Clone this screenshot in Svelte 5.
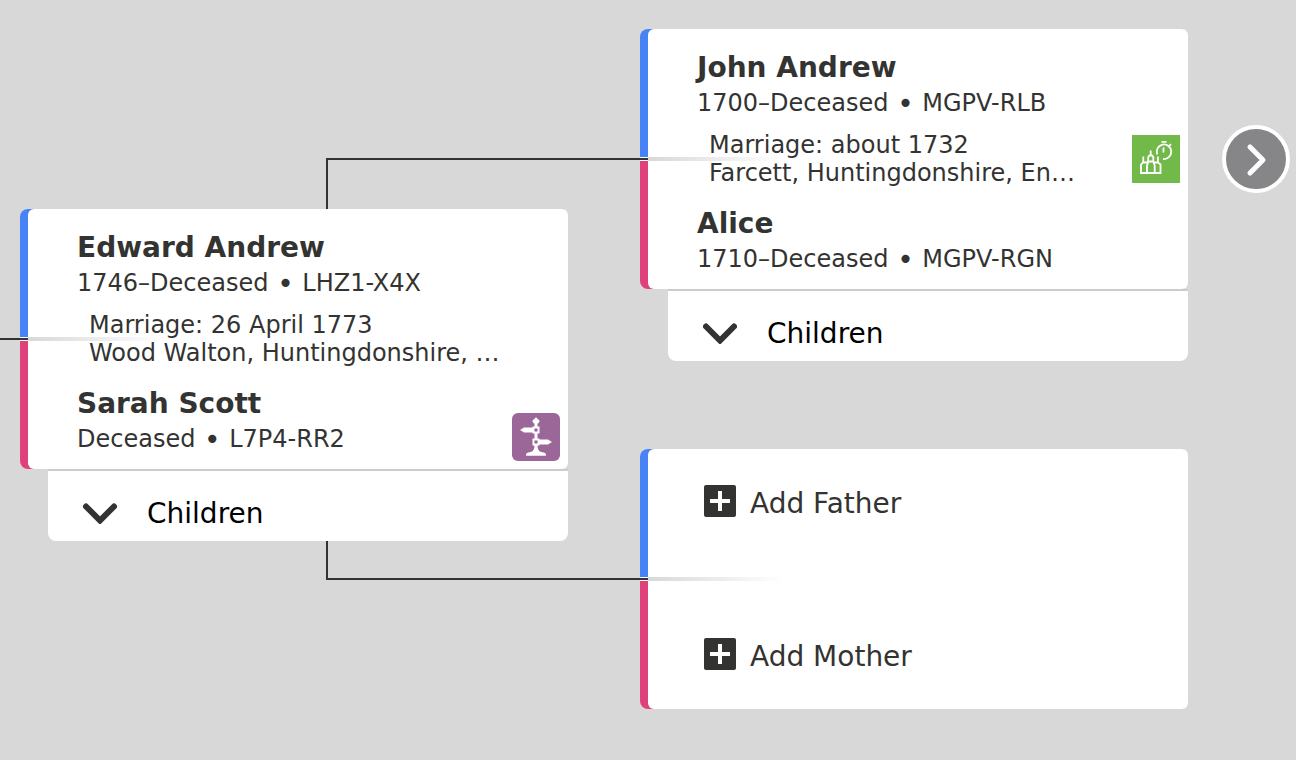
<!--
  Pedigree view: one column per generation, joined by connector lines.
  Each family is a couple card with an optional "Children" toggle below it.
-->

<script>
	let generations = $state([
		[
			{
				id: 'edward-sarah',
				father: { name: 'Edward Andrew', life: '1746–Deceased', pid: 'LHZ1-X4X' },
				marriage: { date: 'Marriage: 26 April 1773', place: 'Wood Walton, Huntingdonshire, …' },
				mother: { name: 'Sarah Scott', life: 'Deceased', pid: 'L7P4-RR2', badge: 'signpost' },
				hasParents: true,
				expanded: false
			}
		],
		[
			{
				id: 'john-alice',
				father: { name: 'John Andrew', life: '1700–Deceased', pid: 'MGPV-RLB' },
				marriage: {
					date: 'Marriage: about 1732',
					place: 'Farcett, Huntingdonshire, En…',
					badge: 'cake'
				},
				mother: { name: 'Alice', life: '1710–Deceased', pid: 'MGPV-RGN' },
				expanded: false
			},
			{ id: 'unknown' }
		]
	]);
</script>

{#snippet badge(kind)}
	{#if kind === 'signpost'}
		<button class="badge badge--signpost">
			<svg viewBox="0 0 48 48" aria-hidden="true">
				<g fill="#fff">
					<path d="M24 4.2L27.8 8l-1.6 2.5h-.7V33h-3V10.500h-.7L20.200 8z" />
					<path d="M8 17l4-2.600h8.500v-1h7v7.200h-7v-1H12z" />
					<path d="M40 29l-4-2.600h-8.500v-1h-7v7.200h7v-1H36z" />
					<path d="M22.500 32h3c.1 3.500.8 5.800 3 6.700l4 1c1.200.4 1.500 1.500 1.500 3H14c0-1.500.3-2.600 1.500-3l4-1c2.200-.9 2.900-3.200 3-6.700z" />
				</g>
				<circle cx="24" cy="17" r="1.8" fill="#9b6799" />
				<circle cx="24" cy="29" r="1.8" fill="#9b6799" />
			</svg>
		</button>
	{:else if kind === 'cake'}
		<button class="badge badge--cake">
			<svg viewBox="0 0 48 48" fill="none" stroke="#fff" stroke-width="1.8" aria-hidden="true">
				<path d="M9 38V29.500L11 27.500h3.500L16 26.500h5l1.500 1H26l2.500 2V38z" />
				<path d="M15 38v-7.500l1.500-4M22.700 38v-7.500l-1.500-4M11.300 21.500v6M25.900 21.500v6M18.700 15.500V20" />
				<path d="M16.200 27v-5l1.300-1.500h2.500l1.300 1.500v5" />
				<path d="M25.200 19.500a7.300 7.300 0 1 1 5.800 4.500" />
				<path d="M29.500 6.800h5M37.200 11l1.800-1.800M31.500 12.500v5" />
			</svg>
		</button>
	{/if}
{/snippet}

{#snippet person(details)}
	<div class="row">
		<div class="person">
			<a class="person__name" href="#person">{details.name}</a>
			<p class="person__details">
				{details.life} <span class="person__dot">•</span> {details.pid}
			</p>
		</div>
		{@render badge(details.badge)}
	</div>
{/snippet}

{#snippet addParent(label)}
	<button class="add">
		<svg class="add__icon" viewBox="0 0 32 32" aria-hidden="true">
			<rect width="32" height="32" rx="2" fill="#333331" />
			<path d="M16 6v20M6 16h20" stroke="#fff" stroke-width="4" />
		</svg>
		<span>{label}</span>
	</button>
{/snippet}

<main class="tree">
	{#each generations as families, index (index)}
		<section class="generation" class:generation--first={index === 0}>
			{#each families as family (family.id)}
				<article class="family" class:family--linked={family.hasParents}>
					<div class="couple">
						<div class="couple__body">
							{#if family.father}
								{@render person(family.father)}
								<div class="row row--marriage">
									<div class="marriage">
										<p>{family.marriage.date}</p>
										<p>{family.marriage.place}</p>
									</div>
									{@render badge(family.marriage.badge)}
								</div>
								{@render person(family.mother)}
							{:else}
								<div class="couple__empty">
									{@render addParent('Add Father')}
									{@render addParent('Add Mother')}
								</div>
							{/if}
						</div>
					</div>
					{#if family.father}
						<button
							class="children"
							aria-expanded={family.expanded}
							onclick={() => (family.expanded = !family.expanded)}
						>
							<svg class="children__icon" viewBox="0 0 34 22" aria-hidden="true">
								<path d="M3 4.500l14 14 14-14" />
							</svg>
							<span>Children</span>
						</button>
					{/if}
				</article>
			{/each}
		</section>
	{/each}

	<button class="next" aria-label="Next generation">
		<svg viewBox="0 0 60 60" aria-hidden="true">
			<path d="M24 18l13 13-13 13" />
		</svg>
	</button>
</main>

<style>
	:global(body) {
		margin: 0;
		background: #d8d8d8;
	}

	.tree {
		display: flex;
		align-items: flex-start;
		box-sizing: border-box;
		min-height: 100vh;
		padding: 29px 6px 48px 20px;
		overflow: hidden;
		color: #333331;
		font-family: 'DejaVu Sans', Verdana, sans-serif;
		font-size: 24px;
	}

	p {
		margin: 0;
	}

	button {
		padding: 0;
		border: 0;
		color: inherit;
		font: inherit;
		cursor: pointer;
	}

	svg {
		display: block;
	}

	.generation {
		flex: 1;
		display: flex;
		flex-direction: column;
		gap: 88px;
		min-width: 0;
	}

	.generation--first {
		margin-right: 72px;
		padding-top: 180px;
	}

	.family {
		position: relative;
	}

	/* Lines out to the two sets of parents */
	.family--linked::before,
	.family--linked::after {
		content: '';
		position: absolute;
		z-index: 1;
		left: calc(50% + 32px);
		right: -80px;
		box-sizing: border-box;
		border-left: 2px solid #333331;
		pointer-events: none;
	}

	.family--linked::before {
		bottom: 100%;
		height: 51px;
		border-top: 2px solid #333331;
	}

	.family--linked::after {
		top: 100%;
		height: 39px;
		border-bottom: 2px solid #333331;
	}

	.couple {
		position: relative;
		padding-left: 8px;
		border-radius: 8px;
		background: linear-gradient(#4782f6 128px, #fff 128px, #fff 132px, #df417b 132px);
	}

	/* Line in from the child, fading out across the card */
	.generation--first .couple::before {
		content: '';
		position: absolute;
		top: 129px;
		left: -20px;
		width: 28px;
		height: 2px;
		background: #333331;
	}

	.couple::after {
		content: '';
		position: absolute;
		top: 128px;
		left: 8px;
		width: 136px;
		height: 4px;
		background: linear-gradient(to right, #d8d8d8, transparent);
	}

	.couple__body {
		box-sizing: border-box;
		min-height: 260px;
		padding: 21px 8px 8px 49px;
		border-radius: 6px;
		background: #fff;
	}

	.couple__empty {
		display: flex;
		flex-direction: column;
		align-items: flex-start;
		gap: 115px;
		padding: 15px 7px 0;
	}

	.row {
		position: relative;
		z-index: 1;
		display: flex;
		align-items: flex-end;
		justify-content: space-between;
	}

	.row--marriage {
		align-items: center;
		margin: 6px 0 19px 12px;
	}

	.person {
		min-width: 0;
		padding-bottom: 4px;
	}

	.person__name {
		display: block;
		color: inherit;
		font-size: 28px;
		font-weight: bold;
		line-height: 36px;
		text-decoration: none;
	}

	.person__details {
		line-height: 35px;
		white-space: nowrap;
	}

	.person__dot {
		margin: 0 1px;
		font-size: 28px;
		line-height: 0;
		vertical-align: -2px;
	}

	.marriage {
		min-width: 0;
		line-height: 28px;
		white-space: nowrap;
	}

	.badge {
		flex: none;
		width: 48px;
		height: 48px;
	}

	.badge--signpost {
		border-radius: 6px;
		background: #9b6799;
	}

	.badge--cake {
		background: #71b949;
	}

	.add {
		display: flex;
		align-items: flex-start;
		gap: 14px;
		background: none;
		font-size: 28px;
		line-height: 38px;
	}

	.add__icon {
		width: 32px;
		height: 32px;
	}

	.children {
		display: flex;
		align-items: center;
		gap: 30px;
		box-sizing: border-box;
		width: calc(100% - 28px);
		height: 72px;
		margin-left: 28px;
		padding: 14px 35px 0;
		border-top: 2px solid #ccc;
		border-radius: 0 0 8px 8px;
		background: #fff;
		color: #000;
		font-size: 28px;
	}

	.children__icon {
		width: 34px;
		height: 22px;
		fill: none;
		stroke: #333331;
		stroke-width: 6;
		stroke-linecap: round;
	}

	.next {
		flex: none;
		box-sizing: border-box;
		width: 68px;
		height: 68px;
		margin: 96px 0 0 34px;
		border: 4px solid #fff;
		border-radius: 50%;
		background: #868688;
	}

	.next svg {
		fill: none;
		stroke: #fff;
		stroke-width: 5;
		stroke-linecap: round;
		stroke-linejoin: round;
	}
</style>
